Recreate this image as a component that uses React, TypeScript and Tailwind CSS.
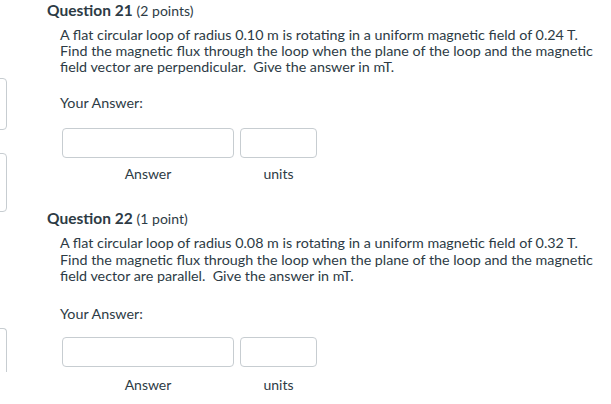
import React from "react";

function AnswerRow({ labelGap }: { labelGap: number }) {
  return (
    <div>
      <div className="flex gap-[6px] ml-[2px]">
        <div className="w-[172px] h-[30px] rounded-[4px] border border-[#c7cdd1] bg-white" />
        <div className="w-[77px] h-[30px] rounded-[4px] border border-[#c7cdd1] bg-white" />
      </div>
      <div
        className="flex gap-[6px] ml-[2px] leading-[16px] text-[14px]"
        style={{ marginTop: labelGap }}
      >
        <div className="w-[172px] text-center">Answer</div>
        <div className="w-[77px] text-center">units</div>
      </div>
    </div>
  );
}

function Question({
  num,
  points,
  lines,
  lh,
  yaGap,
  boxGap,
  labelGap,
}: {
  num: number;
  points: string;
  lines: string[];
  lh: number;
  yaGap: number;
  boxGap: number;
  labelGap: number;
}) {
  return (
    <div>
      <div className="leading-[20px] text-[15.5px]">
        <span className="font-bold">Question {num}</span>{" "}
        <span className="text-[14px]">({points})</span>
      </div>
      <div className="pl-[13px] mt-[6px]">
        <div className="text-[14.3px]" style={{ lineHeight: lh + "px" }}>
          {lines.map((l, i) => (
            <div key={i} className="whitespace-pre">
              {l}
            </div>
          ))}
        </div>
        <div className="text-[14.3px] leading-[16px]" style={{ marginTop: yaGap }}>
          Your Answer:
        </div>
        <div style={{ marginTop: boxGap }}>
          <AnswerRow labelGap={labelGap} />
        </div>
      </div>
    </div>
  );
}

export default function App() {
  return (
    <div
      className="w-[611px] h-[404px] overflow-hidden bg-white text-[#2d3b45] flex"
      style={{ fontFamily: "Lato, 'Noto Sans', sans-serif" }}
    >
      <div className="w-[7px] shrink-0 overflow-hidden">
        <div className="ml-[-12px] w-[19px] h-[52px] mt-[78px] rounded-[4px] border border-[#c7cdd1]" />
        <div className="ml-[-12px] w-[19px] h-[59px] mt-[23px] rounded-[4px] border border-[#c7cdd1]" />
        <div className="ml-[-12px] w-[19px] h-[44px] mt-[116px] rounded-tr-[4px] border border-b-0 border-[#c7cdd1]" />
      </div>
      <div className="ml-[40px] flex-1">
        <Question
          num={21}
          points="2 points"
          lh={16}
          yaGap={20}
          boxGap={17}
          labelGap={8}
          lines={[
            "A flat circular loop of radius 0.10 m is rotating in a uniform magnetic field of 0.24 T.",
            "Find the magnetic flux through the loop when the plane of the loop and the magnetic",
            "field vector are perpendicular.  Give the answer in mT.",
          ]}
        />
        <div className="mt-[26px]">
          <Question
            num={22}
            points="1 point"
            lh={16.5}
            yaGap={21}
            boxGap={15}
            labelGap={10}
            lines={[
              "A flat circular loop of radius 0.08 m is rotating in a uniform magnetic field of 0.32 T.",
              "Find the magnetic flux through the loop when the plane of the loop and the magnetic",
              "field vector are parallel.  Give the answer in mT.",
            ]}
          />
        </div>
      </div>
    </div>
  );
}
